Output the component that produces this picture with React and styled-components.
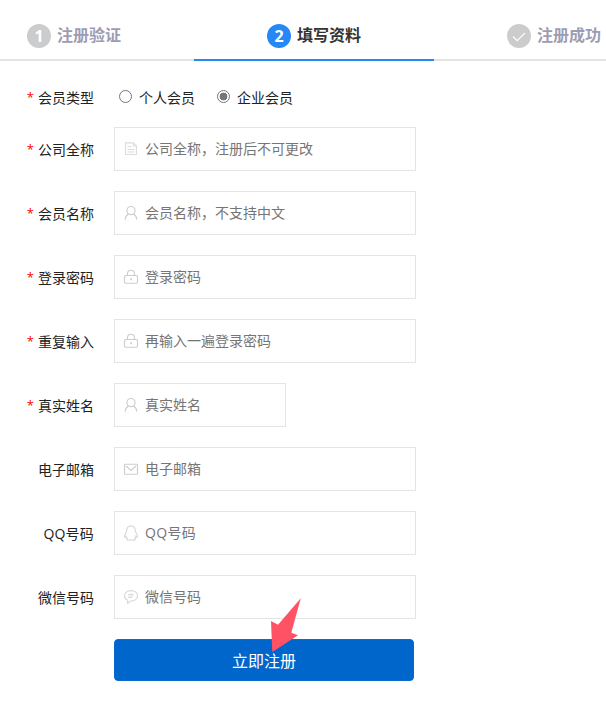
import React, { useState } from "react";
import styled, { createGlobalStyle } from "styled-components";

const GlobalStyle = createGlobalStyle`
  * { box-sizing: border-box; }
  body {
    margin: 0;
    background: #fff;
    color: #333;
    overflow: hidden;
    font: 14px/20px "Open Sans", "Noto Sans CJK SC", sans-serif;
  }
`;

const Page = styled.main`
  width: 100%;
  height: 723px;
  overflow: hidden;
`;

const Steps = styled.ol`
  display: flex;
  width: 720px;
  height: 61px;
  margin: 0 0 0 -46px;
  padding: 0;
  list-style: none;
`;

const Step = styled.li`
  flex: 0 0 240px;
  display: flex;
  justify-content: center;
  gap: 6px;
  padding-top: 24px;
  border-bottom: 2px solid ${(p) => (p.$active ? "#2688f5" : "#e4e4e4")};
  color: ${(p) => (p.$active ? "#333" : "#9c9cb4")};
  font-size: 16px;
  font-weight: 700;
  line-height: 22px;
  white-space: nowrap;
`;

const StepMark = styled.span`
  display: flex;
  align-items: center;
  justify-content: center;
  width: 24px;
  height: 24px;
  border-radius: 50%;
  background: ${(p) => (p.$active ? "#2688f5" : "#ccc")};
  color: #fff;
  font-size: 16px;
  line-height: 24px;
`;

const Form = styled.form`
  display: flex;
  flex-direction: column;
  gap: 20px;
  padding-top: 26px;
`;

const Row = styled.div`
  display: flex;
  align-items: center;
  height: ${(p) => (p.$compact ? 20 : 44)}px;
`;

const Label = styled.label`
  flex: 0 0 94px;
  margin-right: 20px;
  text-align: right;
  color: #222;
  padding-top: 2px;
  letter-spacing: ${(p) => (p.$latin ? "0.2px" : "normal")};
`;

const Required = styled.span`
  position: relative;
  top: -1px;
  margin-right: 4px;
  color: #f00;
  font-size: 13px;
`;

const RadioGroup = styled.div`
  display: flex;
  gap: 22px;
  padding-left: 5px;
`;

const RadioOption = styled.label`
  display: flex;
  gap: 7px;
  padding-top: 2px;
  color: #222;
`;

const Radio = styled.input`
  appearance: none;
  width: 13px;
  height: 13px;
  margin: 2px 0 0;
  border: 1px solid #767676;
  border-radius: 50%;
  background: #fff;
  &:checked {
    background: radial-gradient(circle, #767676 3.6px, #fff 4.2px);
  }
`;

const Field = styled.div`
  display: flex;
  align-items: center;
  width: ${(p) => (p.$short ? 172 : 302)}px;
  height: 44px;
  padding: 0 8px;
  border: 1px solid #e4e4e4;
  background: #fff;
`;

const FieldIcon = styled.svg`
  flex: none;
  width: 16px;
  height: 16px;
  margin-right: 6px;
  fill: none;
  stroke: #cdcdd0;
  stroke-width: 1.15;
`;

const Input = styled.input`
  flex: 1;
  min-width: 0;
  height: 40px;
  padding: 0 0 2px;
  border: 0;
  outline: 0;
  background: transparent;
  color: #333;
  font: inherit;
  &::placeholder {
    color: #757575;
    opacity: 1;
    letter-spacing: ${(p) => (p.$latin ? "0.3px" : "normal")};
  }
`;

const SubmitArea = styled.div`
  position: relative;
  width: 300px;
  margin-left: 114px;
`;

const SubmitButton = styled.button`
  display: block;
  width: 100%;
  height: 42px;
  padding: 2px 0 0;
  border: 1px solid #0a6ccf;
  border-radius: 4px;
  background: #0066cc;
  color: #fff;
  font: inherit;
  font-size: 16px;
`;

const Pointer = styled.svg`
  position: absolute;
  left: 156px;
  top: -41px;
  width: 32px;
  height: 55px;
  pointer-events: none;
`;

const icons = {
  company: (
    <>
      <path d="M2.5 1.9h8l3 3v8.6h-11z" stroke="#dcdcdc" />
      <path d="M10.5 2v3h3M4.5 5.5h4M4.5 8.5h7M4.5 11h7" stroke="#dcdcdc" />
    </>
  ),
  user: (
    <>
      <circle cx="8" cy="5.6" r="4.1" />
      <path d="M5.6 9C3.6 10 2.4 12 2.2 14.6M10.4 9c2 1 3.2 3 3.4 5.6" />
    </>
  ),
  lock: (
    <>
      <rect x="1.5" y="6.5" width="13" height="7.7" rx="1.2" />
      <path d="M4.5 6.5V4.7a3.5 3.5 0 0 1 7 0v1.8" />
      <path d="M8 9.3v2" strokeWidth="1.7" />
    </>
  ),
  mail: (
    <>
      <rect x="1.5" y="3.2" width="13" height="10" rx=".5" />
      <path d="M3 5l5 4.4L13 5" />
    </>
  ),
  qq: (
    <path
      stroke="#d8d8d8"
      d="M8 .8C5.2.8 3.8 2.8 3.8 5.3c0 1.8-2.2 3.8-2.3 6.3 0 1 .8 1 1.7-.2.2 1 .6 1.6 1.1 2.1-1.3.8-.5 1.7 1.2 1.7 1.2 0 1.7-.3 2.5-.3s1.3.3 2.5.3c1.7 0 2.5-.9 1.2-1.7.5-.5.9-1.1 1.1-2.1.9 1.2 1.7 1.2 1.7.2-.1-2.5-2.3-4.5-2.3-6.3C12.2 2.8 10.8.8 8 .8z"
    />
  ),
  wechat: (
    <>
      <path stroke="#d8d8d8" d="M8 1.6c-3.7 0-6.5 2.2-6.5 5.2 0 2 1.3 3.6 3.2 4.4v3.2l2.9-2.3c4.1.1 6.9-2.2 6.9-5.3S11.7 1.6 8 1.6z" />
      <path stroke="#dcdcdc" d="M5.3 5.3h5.2M5.3 7h5.2M5.3 8.5H9" />
    </>
  ),
};

const fields = [
  { id: "company", label: "公司全称", hint: "公司全称，注册后不可更改", icon: "company", required: true },
  { id: "username", label: "会员名称", hint: "会员名称，不支持中文", icon: "user", required: true },
  { id: "password", label: "登录密码", hint: "登录密码", icon: "lock", required: true, type: "password" },
  { id: "repeat", label: "重复输入", hint: "再输入一遍登录密码", icon: "lock", required: true, type: "password" },
  { id: "realname", label: "真实姓名", hint: "真实姓名", icon: "user", required: true, short: true },
  { id: "email", label: "电子邮箱", hint: "电子邮箱", icon: "mail" },
  { id: "qq", label: "QQ号码", hint: "QQ号码", icon: "qq", latin: true },
  { id: "wechat", label: "微信号码", hint: "微信号码", icon: "wechat" },
];

export default function App() {
  const [type, setType] = useState("企业会员");
  return (
    <Page lang="zh-CN">
      <GlobalStyle />
      <Steps>
        <Step>
          <StepMark>1</StepMark>注册验证
        </Step>
        <Step $active>
          <StepMark $active>2</StepMark>填写资料
        </Step>
        <Step>
          <StepMark>
            <svg width="24" height="24" viewBox="0 0 24 24" fill="none" stroke="#fff" strokeWidth="1.1">
              <path d="M6 12.5l4.2 4.2L18 8.8" />
            </svg>
          </StepMark>
          注册成功
        </Step>
      </Steps>
      <Form onSubmit={(e) => e.preventDefault()}>
        <Row $compact>
          <Label as="span">
            <Required>*</Required>会员类型
          </Label>
          <RadioGroup>
            {["个人会员", "企业会员"].map((name) => (
              <RadioOption key={name}>
                <Radio type="radio" name="type" checked={type === name} onChange={() => setType(name)} />
                {name}
              </RadioOption>
            ))}
          </RadioGroup>
        </Row>
        {fields.map((f) => (
          <Row key={f.id}>
            <Label htmlFor={f.id} $latin={f.latin}>
              {f.required && <Required>*</Required>}
              {f.label}
            </Label>
            <Field $short={f.short}>
              <FieldIcon viewBox="0 0 16 16">{icons[f.icon]}</FieldIcon>
              <Input id={f.id} type={f.type || "text"} placeholder={f.hint} $latin={f.latin} />
            </Field>
          </Row>
        ))}
        <SubmitArea>
          <SubmitButton type="submit">立即注册</SubmitButton>
          <Pointer viewBox="0 0 32 55">
            <path fill="#ff5265" d="M30.8.2L21.3 34.7 28 37.3 2.3 54 1 23l7 3.7z" />
          </Pointer>
        </SubmitArea>
      </Form>
    </Page>
  );
}
